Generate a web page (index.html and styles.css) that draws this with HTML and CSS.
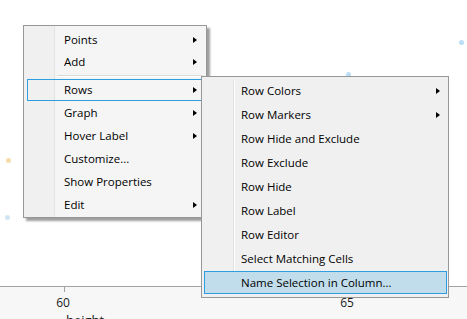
FILE: index.html
```html
<!DOCTYPE html>
<html>
<head>
<meta charset="utf-8">
<link rel="stylesheet" href="styles.css">
</head>
<body>
<div class="page">
  <div class="plot">
    <span class="dot dot-orange" style="left:8px;top:160px"></span>
    <span class="dot dot-pale" style="left:7px;top:217px"></span>
    <span class="dot dot-blue" style="left:461px;top:42px"></span>
    <span class="dot dot-blue" style="left:348px;top:74px"></span>
  </div>
  <div class="axis">
    <span class="tick" style="left:64px"></span>
    <span class="tick-label" style="left:63px">60</span>
    <span class="tick" style="left:347px"></span>
    <span class="tick-label" style="left:347px">65</span>
    <span class="axis-title">height</span>
  </div>

  <div class="menu main-menu">
    <div class="gutter"></div>
    <div class="items">
      <div class="item h22"><span class="label">Points</span><span class="arrow"></span></div>
      <div class="item h22"><span class="label">Add</span><span class="arrow"></span></div>
      <div class="sep"></div>
      <div class="item h22 active"><span class="label">Rows</span><span class="arrow"></span></div>
      <div class="item h23"><span class="label">Graph</span><span class="arrow"></span></div>
      <div class="item h23"><span class="label">Hover Label</span><span class="arrow"></span></div>
      <div class="item h23"><span class="label">Customize...</span></div>
      <div class="item h23"><span class="label">Show Properties</span></div>
      <div class="item h23"><span class="label">Edit</span><span class="arrow"></span></div>
    </div>
  </div>

  <div class="menu sub-menu">
    <div class="gutter"></div>
    <div class="items">
      <div class="item h24"><span class="label">Row Colors</span><span class="arrow"></span></div>
      <div class="item h24"><span class="label">Row Markers</span><span class="arrow"></span></div>
      <div class="item h24"><span class="label">Row Hide and Exclude</span></div>
      <div class="item h24"><span class="label">Row Exclude</span></div>
      <div class="item h24"><span class="label">Row Hide</span></div>
      <div class="item h24"><span class="label">Row Label</span></div>
      <div class="item h24"><span class="label">Row Editor</span></div>
      <div class="item h24"><span class="label">Select Matching Cells</span></div>
      <div class="item h24 selected"><span class="label">Name Selection in Column...</span></div>
    </div>
  </div>
</div>
</body>
</html>
```
FILE: styles.css
```css
* { box-sizing: border-box; }
html, body { margin: 0; padding: 0; }
body {
  width: 467px;
  height: 319px;
  overflow: hidden;
  background: #ffffff;
  font-family: "Open Sans", "Noto Sans", sans-serif;
  font-size: 11.5px;
  color: #000;
}
.page {
  position: relative;
  width: 467px;
  height: 319px;
  display: flex;
  flex-direction: column;
}
.plot {
  position: relative;
  height: 286px;
  background: #ffffff;
}
.dot {
  position: absolute;
  width: 5px;
  height: 5px;
  margin: -2px 0 0 -2px;
  border-radius: 50%;
}
.dot-orange { background: #f6dcaa; }
.dot-pale { background: #cfe6f4; }
.dot-blue { background: #bcdef5; }
.axis {
  position: relative;
  flex: 1;
  background: #f7f7f7;
  border-top: 1px solid #a3a3a3;
}
.tick {
  position: absolute;
  top: 0;
  width: 1px;
  height: 5px;
  background: #a3a3a3;
}
.tick-label {
  position: absolute;
  top: 8px;
  transform: translateX(-50%);
  font-size: 12px;
  line-height: 16px;
  color: #1a1a1a;
}
.axis-title {
  position: absolute;
  left: 66px;
  top: 25px;
  font-size: 13px;
  line-height: 16px;
  color: #1a1a1a;
}

.menu {
  position: absolute;
  display: flex;
  border: 1px solid #979797;
}
.main-menu {
  left: 23px;
  top: 25px;
  width: 184px;
  height: 193px;
  background: #f5f5f5;
  box-shadow: 3px 3px 2px rgba(0, 0, 0, 0.38);
}
.main-menu .gutter {
  position: absolute;
  left: 0;
  top: 0;
  bottom: 0;
  width: 31px;
  background: #f0f0f0;
  border-right: 1px solid #e2e2e2;
}
.main-menu .items {
  position: relative;
  flex: 1;
  padding: 3px 0 0 0;
}
.sep {
  height: 6px;
  margin-left: 33px;
  margin-right: 3px;
  padding-top: 2px;
}
.sep::before {
  content: "";
  display: block;
  height: 1px;
  background: #dadada;
  box-shadow: 0 1px 0 #ffffff;
}
.sub-menu {
  left: 201px;
  top: 76px;
  width: 248px;
  height: 222px;
  background: #f0f0f0;
}
.sub-menu .gutter {
  position: absolute;
  left: 31px;
  top: 4px;
  bottom: 4px;
  width: 1px;
  background: #e0e0e0;
  box-shadow: 1px 0 0 #ffffff;
}
.sub-menu .items {
  position: relative;
  flex: 1;
  padding: 2px 0 0 0;
}
.item {
  position: relative;
  display: flex;
  align-items: center;
  border: 1px solid transparent;
}
.h22 { height: 22px; }
.h23 { height: 23px; }
.h24 { height: 24px; }
.main-menu .item {
  margin: 0 3px;
  padding-left: 36px;
}
.sub-menu .item {
  margin: 0 1px 0 2px;
  padding-left: 36px;
}
.item.active {
  border-color: #2f9ee0;
}
.item.selected {
  border-color: #2f9ee0;
  background: #c1dcea;
  height: 23px;
}
.label {
  flex: 1;
  white-space: nowrap;
  line-height: 16px;
}
.arrow {
  width: 0;
  height: 0;
  border-left: 4px solid #000;
  border-top: 3.5px solid transparent;
  border-bottom: 3.5px solid transparent;
}
.main-menu .arrow { margin-right: 5px; }
.sub-menu .arrow { margin-right: 6px; }
```
